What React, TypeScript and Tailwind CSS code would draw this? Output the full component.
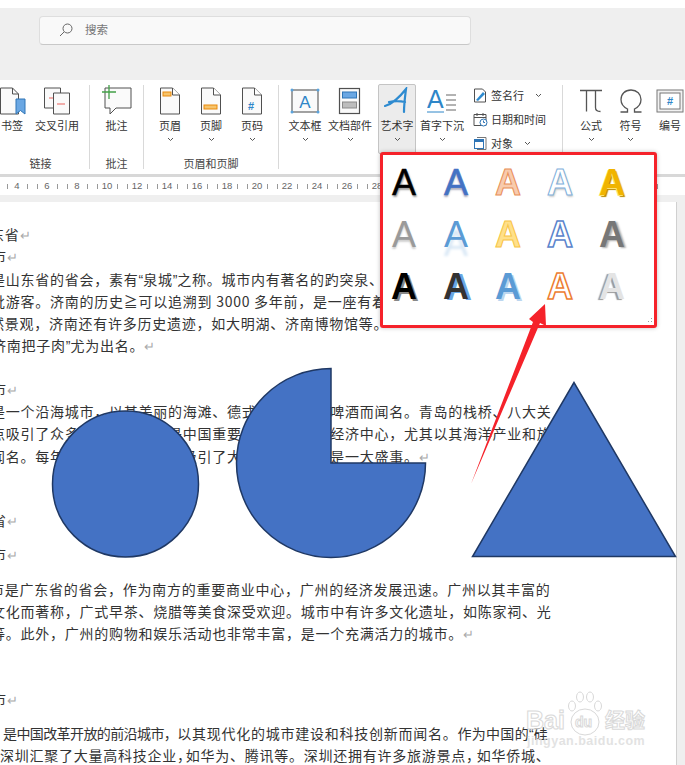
import React from "react";

const S = "#505050";

function Page({ children }: { children?: React.ReactNode }) {
  return (
    <svg width="26" height="28" viewBox="0 0 26 28" fill="none">
      <path d="M3.5 1h12l7 7v19h-19z" fill="#fafafa" stroke={S} />
      <path d="M15.5 1v7h7" fill="#fff" stroke={S} />
      {children}
    </svg>
  );
}

const icons: Record<string, React.ReactNode> = {
  bookmark: (
    <svg width="28" height="28" viewBox="0 0 28 28" fill="none">
      <path d="M2.5 1h12l6 6v20h-18z" fill="#fafafa" stroke={S} />
      <path d="M14.5 1v6h6" stroke={S} />
      <path d="M18 12h9v15l-4.500-3.500L18 27z" fill="#6aa7e3" stroke="#2e75b6" />
    </svg>
  ),
  cross: (
    <svg width="28" height="28" viewBox="0 0 28 28" fill="none">
      <path d="M1.500 1h16v20h-16z" fill="#fafafa" stroke={S} />
      <path d="M10.500 6h16v21h-16z" fill="#fafafa" stroke={S} />
      <path d="M6 11h4" stroke="#e8605a" />
      <path d="M14 17h8" stroke="#e8605a" />
    </svg>
  ),
  comment: (
    <svg width="30" height="32" viewBox="0 0 30 32" fill="none">
      <path d="M3 3h26v20H14l-6 6v-6H3z" fill="#fafafa" stroke={S} />
      <path d="M0 7h14M7 0v14" stroke="#43a047" strokeWidth="1.300" />
    </svg>
  ),
  header: (
    <Page>
      <rect x="6" y="5" width="8" height="4" fill="#f6c36a" stroke="#e8890c" />
    </Page>
  ),
  footer: (
    <Page>
      <rect x="6" y="18" width="13" height="4" fill="#f6c36a" stroke="#e8890c" />
    </Page>
  ),
  pageno: (
    <Page>
      <text x="9" y="23" fontSize="11" fontWeight="700" fill="#2e86c8" fontFamily="Liberation Sans">#</text>
    </Page>
  ),
  textbox: (
    <svg width="30" height="28" viewBox="0 0 30 28" fill="none">
      <rect x="2" y="3" width="26" height="22" fill="#fafafa" stroke="#707070" strokeWidth="1.300" />
      <text x="15" y="21" textAnchor="middle" fontSize="17" fill="#2e86c8" fontFamily="Liberation Sans">A</text>
      {[[2, 3], [28, 3], [2, 25], [28, 25]].map(([x, y]) => (
        <circle key={x + "-" + y} cx={x} cy={y} r="1.500" fill="#5ba3dc" />
      ))}
    </svg>
  ),
  parts: (
    <svg width="24" height="28" viewBox="0 0 24 28" fill="none">
      <rect x="1.500" y="1.500" width="20" height="25" fill="#fafafa" stroke={S} strokeWidth="1.200" />
      <rect x="4.500" y="5" width="14" height="6" fill="#6aa7e3" stroke="#2e75b6" />
      <rect x="4.500" y="15" width="14" height="6" fill="#bdbdbd" stroke="#8a8a8a" />
    </svg>
  ),
  wordart: (
    <svg width="26" height="28" viewBox="0 0 26 28" fill="none">
      <path d="M1 19c7-2 14-8 21-17-1 8-2 15-2 23M5 15c5-1 11-1 16 0" stroke="#2e8bd0" strokeWidth="2.200" strokeLinecap="round" />
    </svg>
  ),
  dropcap: (
    <svg width="30" height="28" viewBox="0 0 30 28" fill="none">
      <text x="0" y="21" fontSize="25" fill="#2e86c8" fontFamily="Liberation Sans">A</text>
      <path d="M0 25h17" stroke="#2e86c8" />
      <path d="M19 8h10M19 13h10M19 18h10M19 23h10" stroke="#666" />
    </svg>
  ),
  pi: (
    <svg width="24" height="26" viewBox="0 0 24 26" fill="none">
      <path d="M1 2.500h22M7.500 2.500v21M16.500 2.500v17c0 3 2 4 5 4" stroke="#555" strokeWidth="1.300" />
    </svg>
  ),
  omega: (
    <svg width="24" height="26" viewBox="0 0 24 26" fill="none">
      <path d="M1.500 24h7v-3C4.500 19 2 15.500 2 11.500 2 6 6 2 12 2s10 4 10 9.500c0 4-2.500 7.500-6.500 9.500v3h7" stroke="#555" strokeWidth="1.300" />
    </svg>
  ),
  number: (
    <svg width="28" height="24" viewBox="0 0 28 24" fill="none">
      <rect x="1" y="1" width="26" height="22" fill="#f2f2f2" stroke="#777" />
      <rect x="4" y="4" width="20" height="16" fill="#fff" stroke="#777" />
      <text x="14" y="16" textAnchor="middle" fontSize="11" fontWeight="700" fill="#2e86c8" fontFamily="Liberation Sans">#</text>
    </svg>
  ),
};

function Chevron({ className = "" }: { className?: string }) {
  return (
    <svg width="7" height="5" viewBox="0 0 7 5" fill="none" className={className}>
      <path d="M1 1l2.500 2.500L6 1" stroke="#555" />
    </svg>
  );
}

function Item({ w, icon, label, chev = true, active = false }: { w: string; icon: string; label: string; chev?: boolean; active?: boolean }) {
  return (
    <div className={`${w} flex flex-col items-center shrink-0 rounded-[2px] ${active ? "h-[70px] mt-[1px] bg-[#ececec] border border-[#c4c4c4]" : "h-[69px]"}`}>
      <div className={`h-[30px] flex items-center justify-center ${active ? "mt-[1px]" : "mt-[3px]"}`}>{icons[icon]}</div>
      <div className="text-[11px] leading-[14px] mt-[2px] text-[#333] whitespace-nowrap">{label}</div>
      {chev && <Chevron className="mt-[5px]" />}
    </div>
  );
}

function Group({ w, label, children }: { w: string; label?: string; children: React.ReactNode }) {
  return (
    <div className={`${w} shrink-0 flex flex-col`}>
      <div className="h-[71px] flex justify-center">{children}</div>
      <div className="text-[11px] leading-[14px] mt-[2px] text-center text-[#444]">{label}</div>
    </div>
  );
}

function Divider() {
  return <div className="w-px h-[84px] mt-[2px] bg-[#d9d9d9] shrink-0" />;
}

function SmallRow({ icon, label, chev }: { icon: React.ReactNode; label: string; chev?: boolean }) {
  return (
    <div className="flex items-center h-[24px] text-[11px] text-[#333] whitespace-nowrap">
      <div className="w-[18px] flex justify-start">{icon}</div>
      <span>{label}</span>
      {chev && <Chevron className="ml-[11px]" />}
    </div>
  );
}

function Ret() {
  return <span className="text-[#aaaaaa] text-[13px] tracking-normal">↵</span>;
}

function Q({ children }: { children: React.ReactNode }) {
  return <span className="font-['Liberation_Sans'] tracking-normal">{children}</span>;
}

function Line({ off, top, children }: { off: string; top?: string; children: React.ReactNode }) {
  return <div className={`h-[22.300px] leading-[22.300px] whitespace-nowrap ${off} ${top ?? ""}`}>{children}</div>;
}

const cellA = "text-[36px] leading-none font-['Liberation_Sans'] block";

const wordart: { cls: string }[] = [
  { cls: "text-black [-webkit-text-stroke:0.400px_#000] [text-shadow:1px_2px_2px_#999]" },
  { cls: "text-[#4472c4] [-webkit-text-stroke:0.600px_#4472c4] [text-shadow:0_2px_2px_#aab]" },
  { cls: "font-bold text-[#f8cbad] [-webkit-text-stroke:1px_#e88f58]" },
  { cls: "font-bold text-white [-webkit-text-stroke:1px_#7fb0dc] [text-shadow:1px_2px_2px_#ccc]" },
  { cls: "font-bold text-[#f0b400] [text-shadow:-1px_1px_0_#ffe270,1px_2px_1px_#b88a00]" },
  { cls: "text-[#9a9a9a] [text-shadow:0_2px_2px_#ccc]" },
  { cls: "text-[#5b9bd5] [text-shadow:0_9px_3px_#d6e6f5]" },
  { cls: "font-bold text-[#ffe08a] [-webkit-text-stroke:1px_#f7c545]" },
  { cls: "font-bold text-white [-webkit-text-stroke:1.500px_#5a84cc]" },
  { cls: "font-bold text-[#777] [text-shadow:2px_1px_2px_#aaa]" },
  { cls: "font-bold text-black [text-shadow:2px_2px_0_#888]" },
  { cls: "font-bold text-[#333] [text-shadow:3px_1px_0_#6aa7e3]" },
  { cls: "font-bold text-[#5b9bd5] [text-shadow:2px_2px_0_#bcd6ef]" },
  { cls: "font-bold text-white [-webkit-text-stroke:1.500px_#ed7d31]" },
  { cls: "font-bold text-[#e4e4e4] [text-shadow:-2px_1px_1px_#999]" },
];

const rulerNums = [4, 6, 8, 10, 12, 14, 16, 18, 20, 22, 24, 26, 28, 30, 32, 34, 36, 38, 40, 42, 44, 46];

export default function App() {
  return (
    <div className="relative w-[685px] h-[765px] overflow-hidden bg-white font-['Noto_Sans_CJK_SC','Liberation_Sans',sans-serif]">
      <div className="h-[8px] bg-white" />
      {/* title area */}
      <div className="h-[72px] bg-[#efefef] pt-[8px] pl-[39px]">
        <div className="w-[432px] h-[29px] bg-[#f9f9f9] rounded-[4px] border border-[#dedede] border-b-[#c8c8c8] flex items-center pl-[19px] pb-[2px]">
          <svg width="14" height="14" viewBox="0 0 14 14" fill="none">
            <circle cx="8.500" cy="5.500" r="4.500" stroke="#666" />
            <path d="M5 9l-4 4" stroke="#666" />
          </svg>
          <span className="ml-[12px] text-[11.500px] text-[#777]">搜索</span>
        </div>
      </div>
      {/* ribbon */}
      <div className="h-[94px] bg-white flex pt-[3px] overflow-hidden -ml-[8px] w-[700px]">
        <Group w="w-[97px]" label="链接">
          <div className="flex justify-start w-full">
            <Item w="w-[40px]" icon="bookmark" label="书签" chev={false} />
            <Item w="w-[50px]" icon="cross" label="交叉引用" chev={false} />
          </div>
        </Group>
        <Divider />
        <Group w="w-[53px]" label="批注">
          <Item w="w-[40px]" icon="comment" label="批注" chev={false} />
        </Group>
        <Divider />
        <Group w="w-[134px]" label="页眉和页脚">
          <Item w="w-[41px]" icon="header" label="页眉" />
          <Item w="w-[41px]" icon="footer" label="页脚" />
          <Item w="w-[41px]" icon="pageno" label="页码" />
        </Group>
        <Divider />
        <div className="w-[283px] shrink-0 flex pl-[4px]">
          <Item w="w-[44px]" icon="textbox" label="文本框" />
          <Item w="w-[46px]" icon="parts" label="文档部件" />
          <div className="w-[5px] shrink-0" />
          <Item w="w-[38px]" icon="wordart" label="艺术字" active />
          <Item w="w-[52px]" icon="dropcap" label="首字下沉" />
          <div className="ml-[5px] flex flex-col text-[#333]">
            <SmallRow
              label="签名行"
              chev
              icon={
                <svg width="14" height="15" viewBox="0 0 14 15" fill="none">
                  <path d="M1.500 1h8l3 3v10h-11z" fill="#fff" stroke={S} />
                  <path d="M3 12l7-8 2 2-7 7z" fill="#2e8bd0" />
                </svg>
              }
            />
            <SmallRow
              label="日期和时间"
              icon={
                <svg width="15" height="15" viewBox="0 0 15 15" fill="none">
                  <path d="M1 2.500h12v11H1zM1 5.500h12M4 1v3M10 1v3" stroke={S} />
                  <circle cx="10.500" cy="10.500" r="3.500" fill="#fff" stroke="#2e75b6" />
                  <path d="M10.500 8.500v2h1.500" stroke="#2e75b6" />
                </svg>
              }
            />
            <SmallRow
              label="对象"
              chev
              icon={
                <svg width="14" height="15" viewBox="0 0 14 15" fill="none">
                  <path d="M4 1.500h9v12H4" stroke="#777" />
                  <rect x="1.500" y="3.500" width="9" height="9" fill="#fff" stroke="#2e75b6" />
                  <path d="M1.500 5h9" stroke="#2e75b6" strokeWidth="2" />
                </svg>
              }
            />
          </div>
        </div>
        <Divider />
        <div className="flex pl-[8px]">
          <Item w="w-[40px]" icon="pi" label="公式" />
          <Item w="w-[39px]" icon="omega" label="符号" />
          <Item w="w-[40px]" icon="number" label="编号" chev={false} />
        </div>
      </div>
      <div className="h-[3px] bg-[#d8d8d8]" />
      {/* ruler */}
      <div className="h-[18px] bg-white flex items-center ml-[2px] w-[720px] overflow-hidden text-[9.500px] text-[#666] font-['Liberation_Sans']">
        {rulerNums.map((n) => (
          <div key={n} className="w-[30px] shrink-0 flex justify-center items-center gap-[4px]">
            <span className="w-px h-[5px] bg-[#999]" />
            <span className="w-[11px] text-center">{n}</span>
            <span className="w-px h-[5px] bg-[#999]" />
          </div>
        ))}
      </div>
      {/* document */}
      <div className="bg-[#efefef] h-[570px] pt-[7px] pr-[8px]">
        <div className="bg-white h-full border-r border-[#d0d0d0] overflow-hidden pt-[21px] text-[14px] tracking-[0.750px] text-[#333]">
          <Line off="-ml-[10px]">东省<Ret /></Line>
          <Line off="-ml-[8px]">市<Ret /></Line>
          <Line off="-ml-[9px]">是山东省的省会，素有<Q>“</Q>泉城<Q>”</Q>之称。城市内有著名的趵突泉、</Line>
          <Line off="-ml-[9px]">批游客。济南的历史≧可以追溯到 3000 多年前，是一座有着</Line>
          <Line off="-ml-[10px]">然景观，济南还有许多历史遗迹，如大明湖、济南博物馆等。</Line>
          <Line off="-ml-[8px]">济南把子肉<Q>”</Q>尤为出名。<Ret /></Line>
          <Line off="-ml-[8px]" top="mt-[21px]">市<Ret /></Line>
          <Line off="-ml-[9px]">是一个沿海城市，以其美丽的海滩、德式建筑和青岛啤酒而闻名。青岛的栈桥、八大关</Line>
          <Line off="-ml-[9px]">点吸引了众多游客。青岛也是中国重要的港口城市和经济中心，尤其以其海洋产业和旅</Line>
          <Line off="-ml-[9px]">闻名。每年的青岛国际啤酒节吸引了大量游客参与，是一大盛事。<Ret /></Line>
          <Line off="-ml-[8px]" top="mt-[42px]">省<Ret /></Line>
          <Line off="-ml-[8px]" top="mt-[12px]">市<Ret /></Line>
          <Line off="-ml-[10px]" top="mt-[12px]">市是广东省的省会，作为南方的重要商业中心，广州的经济发展迅速。广州以其丰富的</Line>
          <Line off="-ml-[9px]">文化而著称，广式早茶、烧腊等美食深受欢迎。城市中有许多文化遗址，如陈家祠、光</Line>
          <Line off="-ml-[9px]">等。此外，广州的购物和娱乐活动也非常丰富，是一个充满活力的城市。<Ret /></Line>
          <Line off="-ml-[8px]" top="mt-[44px]">市<Ret /></Line>
          <Line off="ml-[3px]" top="mt-[11px]">
            <span className="tracking-[-0.600px]">是中国改革开放的前沿城市，</span>以其现代化的城市建设和科技创新而闻名。<span className="tracking-[0.300px]">作为中国的</span><Q>“</Q>硅
          </Line>
          <Line off="ml-0">
            深圳汇聚了大量高科技企业<span className="-mr-[6px]">，</span>如华为、<span className="border-b border-[#8ab0e0]">腾讯</span>等。深圳还拥有许多旅游景点<span className="-mr-[4px]">，</span>如华侨城、
          </Line>
        </div>
      </div>

      {/* shapes laid on the free canvas of the page */}
      <svg width="685" height="765" viewBox="0 0 685 765" className="absolute left-0 top-0 pointer-events-none">
        <circle cx="125.500" cy="484" r="73" fill="#4472c4" stroke="#1f3864" strokeWidth="1.500" />
        <path d="M331 463V368.500A94.500 94.500 0 1 0 425.500 463Z" fill="#4472c4" stroke="#1f3864" strokeWidth="1.500" />
        <path d="M574 382.500L472.500 556.500H675.500Z" fill="#4472c4" stroke="#1f3864" strokeWidth="1.500" />
      </svg>

      {/* word art gallery */}
      <div className="absolute left-[380px] top-[152px] w-[277px] h-[176px] bg-white border-[3px] border-[#f5222a] rounded-[3px] shadow-[0_0_4px_rgba(0,0,0,0.25)] pt-[2px]">
        <div className="grid grid-cols-[repeat(5,52px)] auto-rows-[52px] -ml-[5px]">
          {wordart.map((a, i) => (
            <div key={i} className="flex items-center justify-center">
              <span className={`${cellA} ${a.cls}`}>A</span>
            </div>
          ))}
        </div>
        <svg width="6" height="6" viewBox="0 0 6 6" className="absolute right-[1px] bottom-[1px]">
          <path d="M4 0h1v1H4zM1 3h1v1H1zM4 3h1v1H4z" fill="#999" />
        </svg>
      </div>

      {/* arrow */}
      <svg width="685" height="765" viewBox="0 0 685 765" className="absolute left-0 top-0 pointer-events-none">
        <path d="M471 484L533 322L529 319L545 304L546 326L540 323Z" fill="#f5222a" />
      </svg>

      {/* watermark */}
      <div className="absolute left-[526px] top-[689px] w-[125px] h-[64px] text-[#d6d6d6] opacity-80">
        <svg width="38" height="48" viewBox="0 0 38 48" fill="none" className="absolute left-[40px] top-[0px]" stroke="#d0d0d0">
          <ellipse cx="19" cy="33" rx="14" ry="13" />
          <ellipse cx="6" cy="17" rx="3.500" ry="5" />
          <ellipse cx="14" cy="8" rx="3.500" ry="5" />
          <ellipse cx="24" cy="8" rx="3.500" ry="5" />
          <ellipse cx="32" cy="17" rx="3.500" ry="5" />
        </svg>
        <div className="absolute left-0 top-[17px] text-[25px] leading-[28px] font-bold font-['Liberation_Sans'] text-white [-webkit-text-stroke:1px_#d0d0d0]">Bai</div>
        <div className="absolute left-[49px] top-[24px] text-[14px] leading-[18px] font-bold font-['Liberation_Sans'] text-white [-webkit-text-stroke:1px_#d0d0d0]">du</div>
        <div className="absolute left-[79px] top-[19px] text-[20px] leading-[24px] font-bold text-white [-webkit-text-stroke:1px_#d0d0d0]">经验</div>
        <div className="absolute left-[1px] top-[44px] text-[12.500px] leading-[16px] font-bold tracking-[0.500px] font-['Liberation_Sans'] text-[#dcdcdc] whitespace-nowrap">jingyan.baidu.com</div>
      </div>
    </div>
  );
}
